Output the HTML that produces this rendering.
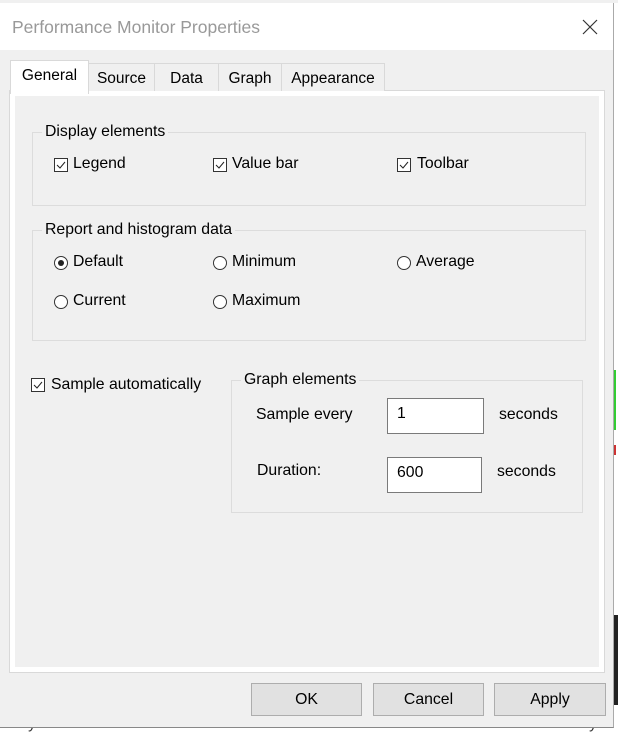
<!DOCTYPE html>
<html><head><style>
body{margin:0;width:618px;height:731px;background:#fff;position:relative;overflow:hidden;font-family:"Liberation Sans",sans-serif;font-size:15.8px;color:#000}
.a{position:absolute}
.dlg{left:0;top:3px;width:613px;height:724px;background:#f0f0f0;border-right:1px solid #aaa;border-bottom:1px solid #888}
.title{left:0;top:0;width:613px;height:47px;background:#fff}
.panel{left:10px;top:91px;width:584px;height:571px;border:5px solid #fff;outline:1px solid #d9d9d9;background:#f0f0f0}
.tab{top:63px;height:27px;border:1px solid #d9d9d9;border-bottom:none;background:#f0f0f0;text-align:center;line-height:29px;font-size:15.5px}
.grp{border:1px solid #dcdcdc}
.lbl{background:#f0f0f0;padding:0 3px;line-height:18px}
.cb{width:12px;height:12px;border:1px solid #333;background:#fff}
.rb{width:12px;height:12px;border:1px solid #333;border-radius:50%;background:#fff}
.t{line-height:18px}
.in{background:#fff;border:1px solid #7a7a7a;height:36px;line-height:30px;padding-left:9px;box-sizing:border-box}
.btn{top:683px;height:31px;background:#e1e1e1;border:1px solid #adadad;text-align:center;line-height:31px}
</style></head><body>
<div class="a" style="left:0;top:0;width:618px;height:3px;background:#f0f0f0"></div>
<div class="a" style="left:0;top:715px;width:80px;color:#333">ͧ MBytes</div>
<div class="a" style="left:540px;top:715px;color:#333">Memory</div>
<div class="a" style="left:614px;top:370px;width:2px;height:60px;background:#3c3"></div>
<div class="a" style="left:614px;top:445px;width:2px;height:10px;background:#c33"></div>
<div class="a" style="left:614px;top:615px;width:4px;height:90px;background:#222"></div>
<div class="a dlg">
 <div class="a title"><div class="a" style="left:12px;top:14px;font-size:17.5px;color:#999">Performance Monitor Properties</div>
 <svg class="a" style="left:582px;top:16px" width="16" height="16"><path d="M1 1L15 15M15 1L1 15" stroke="#333" stroke-width="1.2"/></svg></div>
</div>
<div class="a panel"></div>
<div class="a tab" style="left:88px;width:65px">Source</div>
<div class="a tab" style="left:154px;width:63px">Data</div>
<div class="a tab" style="left:218px;width:62px">Graph</div>
<div class="a tab" style="left:281px;width:102px">Appearance</div>
<div class="a tab" style="left:10px;top:60px;height:33px;width:77px;background:#fff;line-height:30px;border-color:#d9d9d9">General</div>

<div class="a grp" style="left:32px;top:132px;width:552px;height:72px"></div>
<div class="a lbl" style="left:42px;top:123px">Display elements</div>
<div class="a cb" style="left:54px;top:158px"></div><svg class="a" style="left:55px;top:159px" width="12" height="12"><path d="M2 6L5 9L10 3" stroke="#222" fill="none"/></svg><div class="a t" style="left:73px;top:155px">Legend</div>
<div class="a cb" style="left:213px;top:158px"></div><svg class="a" style="left:214px;top:159px" width="12" height="12"><path d="M2 6L5 9L10 3" stroke="#222" fill="none"/></svg><div class="a t" style="left:232px;top:155px">Value bar</div>
<div class="a cb" style="left:397px;top:158px"></div><svg class="a" style="left:398px;top:159px" width="12" height="12"><path d="M2 6L5 9L10 3" stroke="#222" fill="none"/></svg><div class="a t" style="left:417px;top:155px">Toolbar</div>

<div class="a grp" style="left:32px;top:230px;width:552px;height:109px"></div>
<div class="a lbl" style="left:42px;top:221px">Report and histogram data</div>
<div class="a rb" style="left:54px;top:256px"></div><div class="a" style="left:58px;top:260px;width:6px;height:6px;border-radius:50%;background:#222"></div><div class="a t" style="left:73px;top:253px">Default</div>
<div class="a rb" style="left:213px;top:256px"></div><div class="a t" style="left:232px;top:253px">Minimum</div>
<div class="a rb" style="left:397px;top:256px"></div><div class="a t" style="left:416px;top:253px">Average</div>
<div class="a rb" style="left:54px;top:295px"></div><div class="a t" style="left:73px;top:292px">Current</div>
<div class="a rb" style="left:213px;top:295px"></div><div class="a t" style="left:232px;top:292px">Maximum</div>

<div class="a cb" style="left:31px;top:378px"></div><svg class="a" style="left:32px;top:379px" width="12" height="12"><path d="M2 6L5 9L10 3" stroke="#222" fill="none"/></svg><div class="a t" style="left:51px;top:376px">Sample automatically</div>

<div class="a grp" style="left:231px;top:380px;width:350px;height:131px"></div>
<div class="a lbl" style="left:241px;top:371px">Graph elements</div>
<div class="a t" style="left:256px;top:406px">Sample every</div>
<div class="a in" style="left:387px;top:398px;width:97px">1</div>
<div class="a t" style="left:499px;top:406px">seconds</div>
<div class="a t" style="left:257px;top:462px">Duration:</div>
<div class="a in" style="left:387px;top:457px;width:95px">600</div>
<div class="a t" style="left:497px;top:463px">seconds</div>

<div class="a btn" style="left:251px;width:109px">OK</div>
<div class="a btn" style="left:373px;width:109px">Cancel</div>
<div class="a btn" style="left:494px;width:110px">Apply</div>
</body></html>
